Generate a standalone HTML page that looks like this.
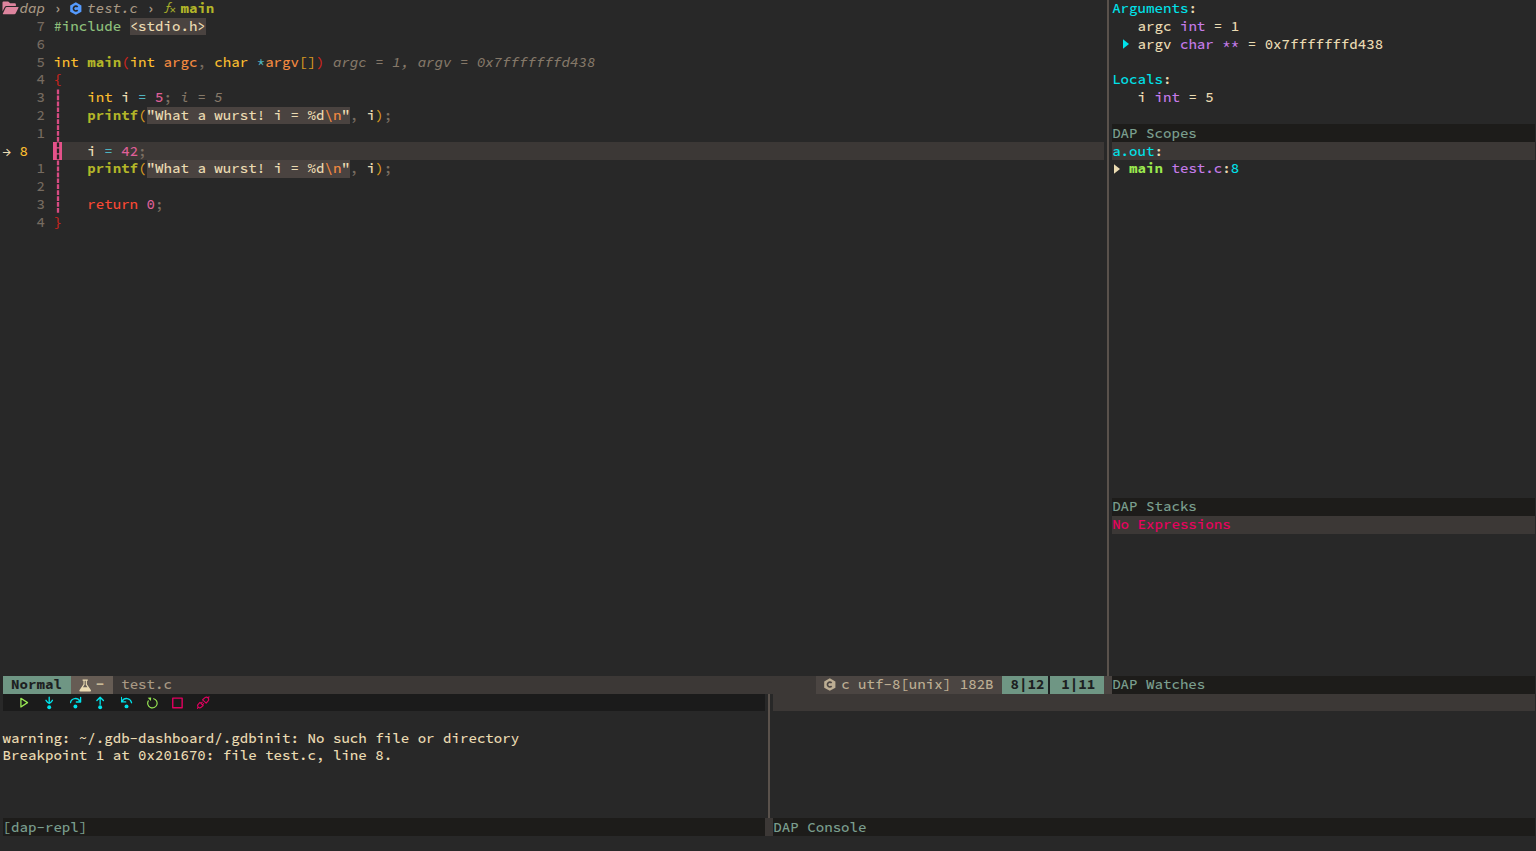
<!DOCTYPE html>
<html lang="en"><head><meta charset="utf-8"><title>nvim-dap test.c</title>
<style>
html,body{margin:0;padding:0;background:#282828;}
body{width:1536px;height:851px;overflow:hidden;position:relative;font-family:"Source Code Pro","DejaVu Sans Mono","Liberation Mono",monospace;font-weight:500;font-size:14.12px;line-height:17.79px;color:#ebdbb2;font-variant-ligatures:none;-webkit-font-smoothing:antialiased;}
.g{position:absolute;left:0;top:0;width:0;height:0;}
.b{position:absolute;display:block;}
.t{position:absolute;white-space:pre;height:18px;line-height:18px;}
.i{font-style:italic} .bd{font-weight:700} .bk{font-weight:900}
.fg{color:#ebdbb2} .fg4{color:#a89984} .fg4b{color:#bdae93} .fg3{color:#c8b996} .lnr{color:#766b60} .vt{color:#857868}
.aq{color:#8ec07c} .yl{color:#fabd2f} .dy{color:#d79921} .grn{color:#b3b628} .rd{color:#cc241d} .br{color:#fb4934}
.or{color:#f38a40} .gr{color:#7c7063} .gr2{color:#786c60} .op{color:#4fb3c0} .pk{color:#e0609a} .dk{color:#1d2021;font-weight:670}
.cy{color:#00e2ea} .pu{color:#c57bea} .lg{color:#9be94f} .cr{color:#ea005f} .st{color:#7a9e8e}
</style></head>
<body>
<div class="g" id="backgrounds">
<div class="b" style="left:53.42px;top:142.17px;width:1050.28px;height:17.79px;background:#3c3836;"></div>
<div class="b" style="left:129.65px;top:17.64px;width:76.23px;height:17.79px;background:#4a4340;"></div>
<div class="b" style="left:146.59px;top:106.59px;width:203.28px;height:17.79px;background:#4a4340;"></div>
<div class="b" style="left:146.59px;top:159.96px;width:203.28px;height:17.79px;background:#4a4340;"></div>
<div class="b" style="left:53.42px;top:142.17px;width:8.47px;height:17.79px;background:#e5528a;"></div>
<div class="b" style="left:2.9px;top:675.87px;width:1109.27px;height:17.79px;background:#3c3836;"></div>
<div class="b" style="left:2.9px;top:675.87px;width:68.1px;height:17.79px;background:#6f9684;"></div>
<div class="b" style="left:71.0px;top:675.87px;width:42.1px;height:17.79px;background:#665c54;"></div>
<div class="b" style="left:816.2px;top:675.87px;width:185.86px;height:17.79px;background:#4b4542;"></div>
<div class="b" style="left:1002.06px;top:675.87px;width:101.64px;height:17.79px;background:#6f9684;"></div>
<div class="b" style="left:1103.7px;top:675.87px;width:8.47px;height:17.79px;background:#4b4542;"></div>
<div class="b" style="left:1047.54px;top:675.87px;width:2.3px;height:17.79px;background:#1d2021"></div>
<div class="b" style="left:2.9px;top:693.66px;width:762.0px;height:17.79px;background:#1b1b1b;"></div>
<div class="b" style="left:773.37px;top:693.66px;width:761.63px;height:17.79px;background:#3c3836;"></div>
<div class="b" style="left:2.9px;top:818.19px;width:762.0px;height:17.79px;background:#1d1c1a;"></div>
<div class="b" style="left:764.9px;top:818.19px;width:8.47px;height:17.79px;background:#3c3836;"></div>
<div class="b" style="left:773.37px;top:818.19px;width:761.63px;height:17.79px;background:#1d1c1a;"></div>
<div class="b" style="left:1112.17px;top:124.38px;width:422.83px;height:17.79px;background:#1d1c1a;"></div>
<div class="b" style="left:1112.17px;top:142.17px;width:422.83px;height:17.79px;background:#3c3836;"></div>
<div class="b" style="left:1112.17px;top:497.97px;width:422.83px;height:17.79px;background:#1d1c1a;"></div>
<div class="b" style="left:1112.17px;top:515.76px;width:422.83px;height:17.79px;background:#3c3836;"></div>
<div class="b" style="left:1112.17px;top:675.87px;width:422.83px;height:17.79px;background:#1d1c1a;"></div>
<div class="b" style="left:1106.88px;top:0;width:2.1px;height:675.87px;background:#5a524c"></div>
<div class="b" style="left:768.14px;top:693.66px;width:2px;height:124.53px;background:#5a524c"></div>
<svg class="b" style="left:54px;top:88.8px" width="8" height="53.37" viewBox="0 0 8 53.37"><line x1="4.000" y1="0.6" x2="4.000" y2="53.37" stroke="#d74b82" stroke-width="2.300" stroke-dasharray="4.73 1.2"/></svg>
<svg class="b" style="left:54px;top:159.96px" width="8" height="53.37" viewBox="0 0 8 53.37"><line x1="4.000" y1="0.6" x2="4.000" y2="53.37" stroke="#d74b82" stroke-width="2.300" stroke-dasharray="4.73 1.2"/></svg>
<svg class="b" style="left:54px;top:142.17px" width="8" height="17.79" viewBox="0 0 8 17.79"><line x1="4.000" y1="0.6" x2="4.000" y2="17.79" stroke="#2a2226" stroke-width="2.300" stroke-dasharray="4.73 1.2"/></svg>
</div><header class="g" id="winbar">
<svg class="b" style="left:0;top:0" width="20" height="16" viewBox="0 0 20 16"><path fill="#de859e" d="M2.500 2.400 Q2.500 1.400 3.500 1.400 H8.200 L10.200 3.300 H14.800 Q15.900 3.300 15.900 4.400 V5.900 H6.400 Q5.400 5.900 4.900 6.800 L2.500 11.300 Z M6.600 6.900 H18.100 Q18.900 6.900 18.500 7.700 L15.600 13.400 Q15.200 14.200 14.300 14.200 H3.300 Q2.400 14.200 2.900 13.400 L5.700 7.600 Q6.000 6.900 6.600 6.900 Z"/></svg>
<span class="t i fg4" style="left:19.54px;top:-1px">dap</span>
<span class="t fg4" style="left:53.42px;top:-1px">›</span>
<svg class="b" style="left:69.6px;top:1.5px" width="12" height="13" viewBox="0 0 12 13"><path fill="#559bff" d="M5.800 0.300 L11.400 3.400 V9.700 L5.800 12.800 L0.200 9.700 V3.400 Z"/><path fill="none" stroke="#282828" stroke-width="1.650" d="M7.640 4.950 A2.400 2.400 0 1 0 7.640 8.150"/></svg>
<span class="t i fg4" style="left:87.3px;top:-1px">test.c</span>
<span class="t fg4" style="left:146.59px;top:-1px">›</span>
<span class="t i" style="left:164.3px;top:-2px;color:#a3aa2a;font-size:13px">ƒ</span>
<span class="t" style="left:169.0px;top:1px;color:#a3aa2a;font-size:12.5px;font-weight:500">×</span>
<span class="t bd grn" style="left:180.47px;top:-1px">main</span>
</header><main class="g" id="editor">
<span class="t lnr" style="left:36.48px;top:17px">7</span>
<span class="t aq" style="left:53.42px;top:17px">#include</span>
<span class="t fg" style="left:129.65px;top:17px">&lt;stdio.h&gt;</span>
<span class="t lnr" style="left:36.48px;top:35px">6</span>
<span class="t lnr" style="left:36.48px;top:53px">5</span>
<span class="t yl" style="left:53.42px;top:53px">int</span>
<span class="t bd grn" style="left:87.3px;top:53px">main</span>
<span class="t rd" style="left:121.18px;top:53px">(</span>
<span class="t yl" style="left:129.65px;top:53px">int</span>
<span class="t or" style="left:163.53px;top:53px">argc</span>
<span class="t gr2" style="left:197.41px;top:53px">,</span>
<span class="t yl" style="left:214.35px;top:53px">char</span>
<span class="t op" style="left:256.7px;top:53px">*</span>
<span class="t or" style="left:265.17px;top:53px">argv</span>
<span class="t dy" style="left:299.05px;top:53px">[]</span>
<span class="t rd" style="left:315.99px;top:53px">)</span>
<span class="t i vt" style="left:332.93px;top:53px">argc</span>
<span class="t i vt" style="left:375.28px;top:53px">=</span>
<span class="t i vt" style="left:392.22px;top:53px">1,</span>
<span class="t i vt" style="left:417.63px;top:53px">argv</span>
<span class="t i vt" style="left:459.98px;top:53px">=</span>
<span class="t i vt" style="left:476.92px;top:53px">0x7fffffffd438</span>
<span class="t lnr" style="left:36.48px;top:70px">4</span>
<span class="t rd" style="left:53.42px;top:70px">{</span>
<span class="t lnr" style="left:36.48px;top:88px">3</span>
<span class="t yl" style="left:87.3px;top:88px">int</span>
<span class="t fg" style="left:121.18px;top:88px">i</span>
<span class="t op" style="left:138.12px;top:88px">=</span>
<span class="t pk" style="left:155.06px;top:88px">5</span>
<span class="t gr" style="left:163.53px;top:88px">;</span>
<span class="t i vt" style="left:180.47px;top:88px">i</span>
<span class="t i vt" style="left:197.41px;top:88px">=</span>
<span class="t i vt" style="left:214.35px;top:88px">5</span>
<span class="t lnr" style="left:36.48px;top:106px">2</span>
<span class="t bd grn" style="left:87.3px;top:106px">printf</span>
<span class="t dy" style="left:138.12px;top:106px">(</span>
<span class="t fg" style="left:146.59px;top:106px">"What</span>
<span class="t fg" style="left:197.41px;top:106px">a</span>
<span class="t fg" style="left:214.35px;top:106px">wurst!</span>
<span class="t fg" style="left:273.64px;top:106px">i</span>
<span class="t fg" style="left:290.58px;top:106px">=</span>
<span class="t fg" style="left:307.52px;top:106px">%d</span>
<span class="t or" style="left:324.46px;top:106px">\n</span>
<span class="t fg" style="left:341.4px;top:106px">"</span>
<span class="t gr2" style="left:349.87px;top:106px">,</span>
<span class="t fg" style="left:366.81px;top:106px">i</span>
<span class="t dy" style="left:375.28px;top:106px">)</span>
<span class="t gr" style="left:383.75px;top:106px">;</span>
<span class="t lnr" style="left:36.48px;top:124px">1</span>
<span class="t fg" style="left:2.6px;top:142px">→</span>
<span class="t yl" style="left:19.54px;top:142px">8</span>
<span class="t fg" style="left:87.3px;top:142px">i</span>
<span class="t op" style="left:104.24px;top:142px">=</span>
<span class="t pk" style="left:121.18px;top:142px">42</span>
<span class="t gr" style="left:138.12px;top:142px">;</span>
<span class="t lnr" style="left:36.48px;top:159px">1</span>
<span class="t bd grn" style="left:87.3px;top:159px">printf</span>
<span class="t dy" style="left:138.12px;top:159px">(</span>
<span class="t fg" style="left:146.59px;top:159px">"What</span>
<span class="t fg" style="left:197.41px;top:159px">a</span>
<span class="t fg" style="left:214.35px;top:159px">wurst!</span>
<span class="t fg" style="left:273.64px;top:159px">i</span>
<span class="t fg" style="left:290.58px;top:159px">=</span>
<span class="t fg" style="left:307.52px;top:159px">%d</span>
<span class="t or" style="left:324.46px;top:159px">\n</span>
<span class="t fg" style="left:341.4px;top:159px">"</span>
<span class="t gr2" style="left:349.87px;top:159px">,</span>
<span class="t fg" style="left:366.81px;top:159px">i</span>
<span class="t dy" style="left:375.28px;top:159px">)</span>
<span class="t gr" style="left:383.75px;top:159px">;</span>
<span class="t lnr" style="left:36.48px;top:177px">2</span>
<span class="t lnr" style="left:36.48px;top:195px">3</span>
<span class="t br" style="left:87.3px;top:195px">return</span>
<span class="t pk" style="left:146.59px;top:195px">0</span>
<span class="t gr" style="left:155.06px;top:195px">;</span>
<span class="t lnr" style="left:36.48px;top:213px">4</span>
<span class="t rd" style="left:53.42px;top:213px">}</span>
</main><footer class="g" id="statusline">
<span class="t bd dk" style="left:11.07px;top:675px">Normal</span>
<svg class="b" style="left:79.0px;top:678.97px" width="12.6" height="13" viewBox="0 0 12.6 13"><path fill="#ebdbb2" d="M3.600 0.500 H8.800 V1.800 H7.900 V5.300 L12.000 11.200 Q12.400 12.500 11.000 12.500 H1.400 Q0.000 12.500 0.400 11.200 L4.500 5.300 V1.800 H3.600 Z"/><path fill="#645c54" d="M5.600 1.800 H6.800 V5.700 L8.500 8.200 H3.900 L5.600 5.700 Z"/></svg>
<span class="t bk fg3" style="left:95.77px;top:675px">-</span>
<span class="t fg4" style="left:121.18px;top:675px">test.c</span>
<svg class="b" style="left:823.7px;top:678.17px" width="12" height="13" viewBox="0 0 12 13"><path fill="#bdae93" d="M5.800 0.300 L11.400 3.400 V9.700 L5.800 12.800 L0.200 9.700 V3.400 Z"/><path fill="none" stroke="#4b4542" stroke-width="1.650" d="M7.640 4.950 A2.400 2.400 0 1 0 7.640 8.150"/></svg>
<span class="t fg4b" style="left:841.13px;top:675px">c</span>
<span class="t fg4b" style="left:858.07px;top:675px">utf-8[unix]</span>
<span class="t fg4b" style="left:959.71px;top:675px">182B</span>
<span class="t bd dk" style="left:1010.53px;top:675px">8|12</span>
<span class="t bd dk" style="left:1061.35px;top:675px">1|11</span>
</footer><nav class="g" id="dap-controls">
<svg class="b" style="left:19.54px;top:693.66px" width="11" height="17.79" viewBox="0 0 11 17.79" fill="none" stroke-linecap="round" stroke-linejoin="round"><path d="M0.900 4.300 L7.500 8.650 L0.900 13.000 Z" stroke="#98e854" stroke-width="1.3"/></svg>
<svg class="b" style="left:44.95px;top:693.66px" width="11" height="17.79" viewBox="0 0 11 17.79" fill="none" stroke-linecap="round" stroke-linejoin="round"><path d="M4.200 3.200 V9.200 M1.000 6.300 Q2.400 8.400 4.200 9.500 Q6.000 8.400 7.400 6.300" stroke="#00e2ea" stroke-width="1.35"/><circle cx="4.200" cy="13.250" r="1.950" fill="#00e2ea"/></svg>
<svg class="b" style="left:70.36px;top:693.66px" width="12" height="17.79" viewBox="0 0 12 17.79" fill="none" stroke-linecap="round" stroke-linejoin="round"><path d="M0.500 8.500 C1.600 3.900 7.600 3.000 10.000 7.300 M10.600 3.500 V8.000 H6.300" stroke="#00e2ea" stroke-width="1.35"/><circle cx="5.400" cy="12.500" r="1.950" fill="#00e2ea"/></svg>
<svg class="b" style="left:95.77px;top:693.66px" width="11" height="17.79" viewBox="0 0 11 17.79" fill="none" stroke-linecap="round" stroke-linejoin="round"><path d="M4.150 10.300 V3.500 M0.900 6.600 L4.150 3.300 L7.400 6.600" stroke="#00e2ea" stroke-width="1.35"/><circle cx="4.150" cy="13.250" r="1.950" fill="#00e2ea"/></svg>
<svg class="b" style="left:121.18px;top:693.66px" width="12" height="17.79" viewBox="0 0 12 17.79" fill="none" stroke-linecap="round" stroke-linejoin="round"><path d="M10.500 8.700 C9.400 3.900 3.400 3.000 1.000 7.300 M0.400 3.500 V7.900 H4.700" stroke="#00e2ea" stroke-width="1.35"/><circle cx="5.500" cy="12.400" r="1.950" fill="#00e2ea"/></svg>
<svg class="b" style="left:146.59px;top:693.66px" width="11" height="17.79" viewBox="0 0 11 17.79" fill="none" stroke-linecap="round" stroke-linejoin="round"><path d="M6.700 4.700 A4.700 4.700 0 1 1 1.300 6.900" stroke="#98e854" stroke-width="1.150"/><path d="M0.700 3.800 L4.200 3.600 L3.900 7.000 Z" fill="#98e854"/></svg>
<svg class="b" style="left:172.0px;top:693.66px" width="12" height="17.79" viewBox="0 0 12 17.79" fill="none" stroke-linecap="round" stroke-linejoin="round"><rect x="0.750" y="4.150" width="9.400" height="9.600" stroke="#e1005f" stroke-width="1.400" stroke-linejoin="round"/></svg>
<svg class="b" style="left:197.41px;top:693.66px" width="13" height="17.79" viewBox="0 0 13 17.79" fill="none" stroke-linecap="round" stroke-linejoin="round"><g stroke="#e1005f" stroke-width="1.15"><path d="M5.600 5.800 L8.000 3.600 C9.000 2.900 10.300 3.100 11.000 3.900 C11.800 4.800 11.800 6.000 11.100 6.900 L9.200 9.200 Z M10.900 3.900 L12.000 2.900"/><path d="M3.000 8.400 L1.200 10.300 C0.500 11.100 0.500 12.300 1.300 13.100 C2.100 13.900 3.300 13.900 4.100 13.300 L6.200 11.600 Z M1.300 13.200 L0.300 14.400 M4.000 9.400 L5.200 8.200 M5.400 10.800 L6.600 9.600"/></g></svg>
</nav><section class="g" id="dap-repl">
<span class="t fg" style="left:2.6px;top:729px">warning:</span>
<span class="t fg" style="left:78.83px;top:729px">~/.gdb-dashboard/.gdbinit:</span>
<span class="t fg" style="left:307.52px;top:729px">No</span>
<span class="t fg" style="left:332.93px;top:729px">such</span>
<span class="t fg" style="left:375.28px;top:729px">file</span>
<span class="t fg" style="left:417.63px;top:729px">or</span>
<span class="t fg" style="left:443.04px;top:729px">directory</span>
<span class="t fg" style="left:2.6px;top:746px">Breakpoint</span>
<span class="t fg" style="left:95.77px;top:746px">1</span>
<span class="t fg" style="left:112.71px;top:746px">at</span>
<span class="t fg" style="left:138.12px;top:746px">0x201670:</span>
<span class="t fg" style="left:222.82px;top:746px">file</span>
<span class="t fg" style="left:265.17px;top:746px">test.c,</span>
<span class="t fg" style="left:332.93px;top:746px">line</span>
<span class="t fg" style="left:375.28px;top:746px">8.</span>
<span class="t st" style="left:2.6px;top:818px">[dap-repl]</span>
<span class="t st" style="left:773.37px;top:818px">DAP</span>
<span class="t st" style="left:807.25px;top:818px">Console</span>
</section><aside class="g" id="dap-sidebar">
<span class="t cy" style="left:1112.17px;top:-1px">Arguments</span>
<span class="t fg" style="left:1188.4px;top:-1px">:</span>
<span class="t fg" style="left:1137.58px;top:17px">argc</span>
<span class="t pu" style="left:1179.93px;top:17px">int</span>
<span class="t fg" style="left:1213.81px;top:17px">=</span>
<span class="t fg" style="left:1230.75px;top:17px">1</span>
<svg class="b" style="left:1120.64px;top:35.43px" width="8.47" height="17.79" viewBox="0 0 8.47 17.79"><path fill="#00e2ea" d="M2.000 4.300 L8.000 9.000 L2.000 13.700 Z"/></svg>
<span class="t fg" style="left:1137.58px;top:35px">argv</span>
<span class="t pu" style="left:1179.93px;top:35px">char</span>
<span class="t pu" style="left:1222.28px;top:35px">**</span>
<span class="t fg" style="left:1247.69px;top:35px">=</span>
<span class="t fg" style="left:1264.63px;top:35px">0x7fffffffd438</span>
<span class="t cy" style="left:1112.17px;top:70px">Locals</span>
<span class="t fg" style="left:1162.99px;top:70px">:</span>
<span class="t fg" style="left:1137.58px;top:88px">i</span>
<span class="t pu" style="left:1154.52px;top:88px">int</span>
<span class="t fg" style="left:1188.4px;top:88px">=</span>
<span class="t fg" style="left:1205.34px;top:88px">5</span>
<span class="t st" style="left:1112.17px;top:124px">DAP</span>
<span class="t st" style="left:1146.05px;top:124px">Scopes</span>
<span class="t cy" style="left:1112.17px;top:142px">a.out</span>
<span class="t fg" style="left:1154.52px;top:142px">:</span>
<svg class="b" style="left:1112.17px;top:159.96px" width="8.47" height="17.79" viewBox="0 0 8.47 17.79"><path fill="#ebdbb2" d="M2.000 4.300 L8.000 9.000 L2.000 13.700 Z"/></svg>
<span class="t bd lg" style="left:1129.11px;top:159px">main</span>
<span class="t pu" style="left:1171.46px;top:159px">test.c</span>
<span class="t fg" style="left:1222.28px;top:159px">:</span>
<span class="t cy" style="left:1230.75px;top:159px">8</span>
<span class="t st" style="left:1112.17px;top:497px">DAP</span>
<span class="t st" style="left:1146.05px;top:497px">Stacks</span>
<span class="t cr" style="left:1112.17px;top:515px">No</span>
<span class="t cr" style="left:1137.58px;top:515px">Expressions</span>
<span class="t st" style="left:1112.17px;top:675px">DAP</span>
<span class="t st" style="left:1146.05px;top:675px">Watches</span>
</aside>
</body></html>
